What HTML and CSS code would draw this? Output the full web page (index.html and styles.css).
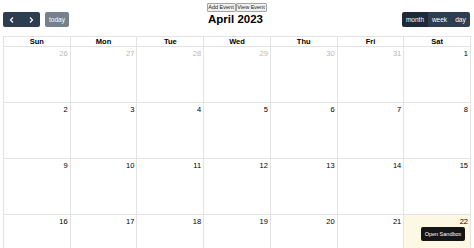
FILE: index.html
```html
<!DOCTYPE html>
<html>
<head>
<meta charset="utf-8">
<link rel="stylesheet" href="styles.css">
</head>
<body>
<div class="cal">
  <div class="toolbar">
    <div class="chunk left">
      <div class="group">
        <button class="fc-btn"><svg width="8" height="8" viewBox="0 0 8 8"><path d="M5 1.5 L2.5 4 L5 6.5" fill="none" stroke="#fff" stroke-width="1.2"/></svg></button>
        <button class="fc-btn"><svg width="8" height="8" viewBox="0 0 8 8"><path d="M3 1.5 L5.5 4 L3 6.5" fill="none" stroke="#fff" stroke-width="1.2"/></svg></button>
      </div>
      <button class="fc-btn today">today</button>
    </div>
    <div class="chunk center">
      <div class="actions">
        <button class="plain add">Add Event</button><button class="plain view">View Event</button>
      </div>
      <h2 class="title">April 2023</h2>
    </div>
    <div class="chunk right">
      <div class="group">
        <button class="fc-btn active w-month">month</button>
        <button class="fc-btn w-week">week</button>
        <button class="fc-btn w-day">day</button>
      </div>
    </div>
  </div>
  <div class="grid">
    <div class="hd">Sun</div><div class="hd">Mon</div><div class="hd">Tue</div><div class="hd">Wed</div><div class="hd">Thu</div><div class="hd">Fri</div><div class="hd">Sat</div>
    <div class="day other">26</div><div class="day other">27</div><div class="day other">28</div><div class="day other">29</div><div class="day other">30</div><div class="day other">31</div><div class="day">1</div>
    <div class="day">2</div><div class="day">3</div><div class="day">4</div><div class="day">5</div><div class="day">6</div><div class="day">7</div><div class="day">8</div>
    <div class="day">9</div><div class="day">10</div><div class="day">11</div><div class="day">12</div><div class="day">13</div><div class="day">14</div><div class="day">15</div>
    <div class="day">16</div><div class="day">17</div><div class="day">18</div><div class="day">19</div><div class="day">20</div><div class="day">21</div><div class="day today-cell">22</div>
  </div>
</div>
<button class="sandbox">Open Sandbox</button>
</body>
</html>
```
FILE: styles.css
```css
html, body {
  margin: 0;
  padding: 0;
  background: #fff;
  overflow: hidden;
  height: 248px;
}
body {
  font-family: "Liberation Sans", Arial, sans-serif;
  color: #000;
}
.cal {
  padding: 3px 3px 0 3px;
}
.toolbar {
  display: flex;
  justify-content: space-between;
  align-items: flex-end;
  height: 24px;
  margin-bottom: 9px;
}
.chunk {
  display: flex;
  align-items: center;
}
.left { gap: 5px; }
.center {
  flex-direction: column;
  align-items: center;
}
.right { margin-right: 1px; }
.group { display: flex; }
.fc-btn {
  font-family: "Liberation Sans", Arial, sans-serif;
  font-size: 6.5px;
  height: 15px;
  padding: 0 4px;
  border: 0;
  background: #2c3e50;
  color: #fff;
  display: flex;
  align-items: center;
  justify-content: center;
  margin: 0;
}
.group .fc-btn:first-child { border-radius: 2px 0 0 2px; }
.group .fc-btn:last-child { border-radius: 0 2px 2px 0; }
.group .fc-btn { width: 18.5px; padding: 0; }
.fc-btn.today {
  width: 24px;
  padding: 0;
  border-radius: 2px;
  opacity: 0.65;
}
.group .w-month { width: 26px; }
.group .w-week { width: 23px; }
.group .w-day { width: 19px; }
.fc-btn.active { background: #1e2b37; }
.actions {
  display: flex;
  height: 9px;
  margin-left: 2px;
}
.plain {
  font-family: "Liberation Sans", Arial, sans-serif;
  font-size: 5.5px;
  height: 9px;
  line-height: 7px;
  padding: 0;
  margin: 0;
  border: 1px solid #a3a3a3;
  border-radius: 1px;
  background: #f0f0f0;
  color: #222;
}
.plain.add { width: 29px; }
.plain.view { width: 31px; }
.title {
  margin: 0;
  font-size: 11.5px;
  font-weight: bold;
  height: 15px;
  line-height: 15px;
}
.grid {
  display: grid;
  grid-template-columns: repeat(7, 1fr);
  grid-template-rows: 10px repeat(4, 56px);
  border-left: 1px solid #e3e3e3;
  border-top: 1px solid #e3e3e3;
}
.hd {
  border-right: 1px solid #e3e3e3;
  border-bottom: 1px solid #e3e3e3;
  font-size: 7.5px;
  font-weight: bold;
  text-align: center;
  line-height: 9px;
}
.day {
  border-right: 1px solid #e3e3e3;
  border-bottom: 1px solid #e3e3e3;
  font-size: 7.5px;
  text-align: right;
  padding: 2px 2px 0 0;
  line-height: 9px;
}
.day.other { color: #b8b8b8; }
.today-cell { background: #fcf8e3; }
.sandbox {
  position: fixed;
  right: 9px;
  bottom: 7px;
  width: 44px;
  height: 14px;
  padding: 0;
  border: 0;
  border-radius: 2px;
  background: #151515;
  color: #fff;
  font-family: "Liberation Sans", Arial, sans-serif;
  font-size: 5.5px;
}
```
